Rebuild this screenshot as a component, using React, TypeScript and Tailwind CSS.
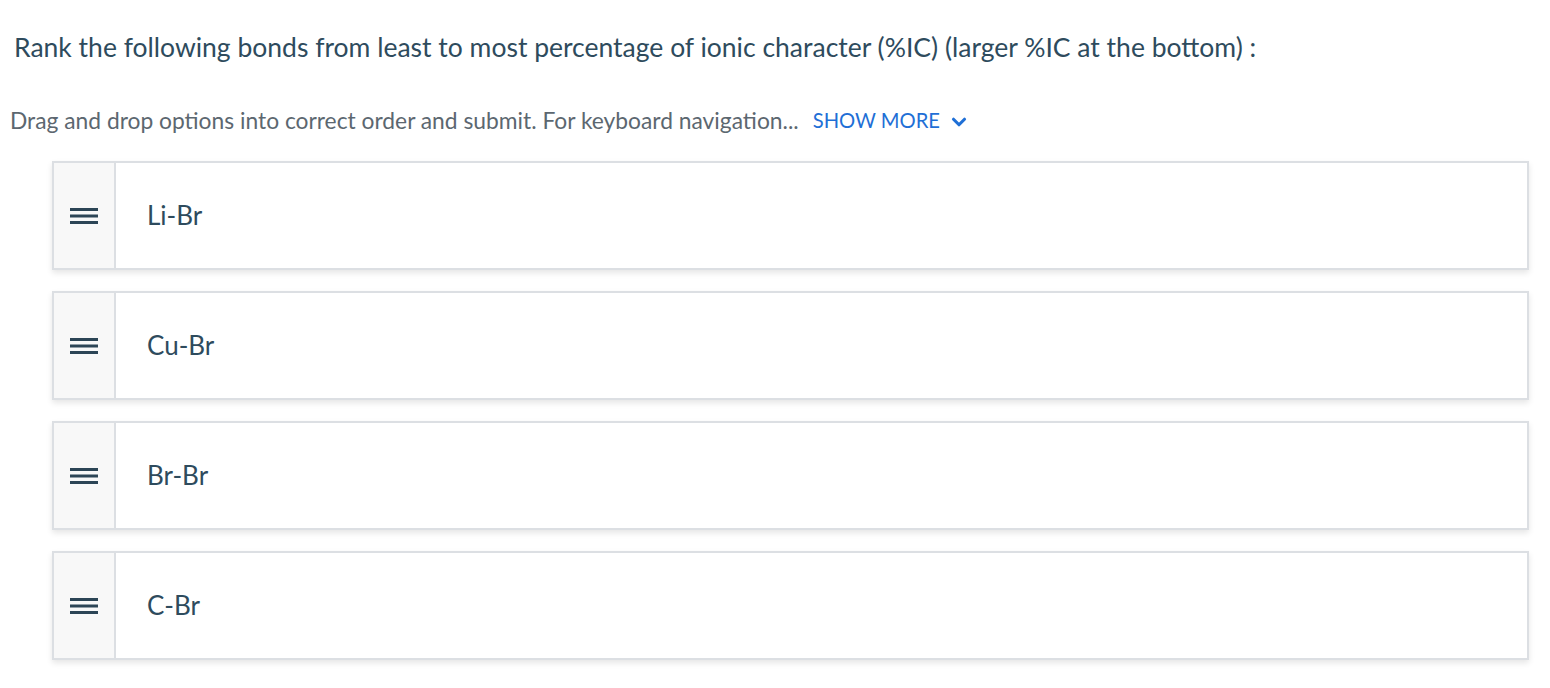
import { ChevronDown } from 'lucide-react'

const options = ['Li-Br', 'Cu-Br', 'Br-Br', 'C-Br']

function Handle() {
  return (
    <svg width="28" height="18" viewBox="0 0 28 18" className="text-[#2c4556]">
      <rect x="0" y="1" width="28" height="3" fill="currentColor" />
      <rect x="0" y="7.5" width="28" height="3" fill="currentColor" />
      <rect x="0" y="14" width="28" height="3" fill="currentColor" />
    </svg>
  )
}

export default function App() {
  return (
    <div className="min-h-screen bg-white font-['Lato','Noto_Sans',sans-serif]">
      {/* Question */}
      <div className="pt-[29px] pl-[14px]">
        <h1 className="text-[26.5px] leading-[36px] text-[#2e4b5d]">
          Rank the following bonds from least to most percentage of ionic character (%IC) (larger %IC at the bottom) :
        </h1>
      </div>

      {/* Instructions */}
      <div className="mt-[40px] pl-[10px] flex items-center text-[22.8px] leading-[30px]">
        <span className="text-[#5c6770]">
          Drag and drop options into correct order and submit. For keyboard navigation...
        </span>
        <button className="ml-[14px] flex items-center gap-[8px] text-[20.2px] text-[#1f6fd6]">
          SHOW MORE
          <ChevronDown className="w-[22px] h-[22px] mt-[3px]" strokeWidth={3.4} />
        </button>
      </div>

      {/* Sortable list */}
      <ul className="mt-[26px] ml-[52px] w-[1477px] flex flex-col gap-[21px]">
        {options.map((opt) => (
          <li
            key={opt}
            className="h-[109px] flex border-2 border-[#dcdfe3] bg-white shadow-[0_3px_6px_rgba(0,0,0,0.1)]"
          >
            <div className="w-[62px] flex items-center justify-center bg-[#f8f8f8] border-r-2 border-[#dcdfe3]">
              <Handle />
            </div>
            <div className="flex items-center pl-[31px] text-[26px] text-[#2e4b5d]">{opt}</div>
          </li>
        ))}
      </ul>
    </div>
  )
}
